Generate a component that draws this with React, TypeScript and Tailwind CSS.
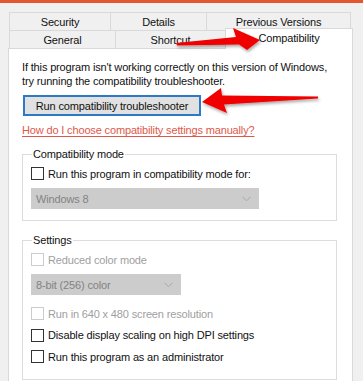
import React from "react";

const font = { fontFamily: '"Liberation Sans", Arial, sans-serif' };

function Check({ label, disabled }: { label: string; disabled?: boolean }) {
    return (
        <div className="flex items-center h-[13px] gap-[4px]">
            <span
                className={
                    "w-[13px] h-[13px] border bg-white shrink-0 " +
                    (disabled ? "border-[#cccccc]" : "border-[#333333]")
                }
            />
            <span className={disabled ? "text-[#a0a0a0]" : "text-[#111111]"}>{label}</span>
        </div>
    );
}

function Select({ value, width }: { value: string; width: string }) {
    return (
        <div className={"h-[21px] bg-[#cccccc] flex items-center justify-between pl-[5px] pr-[8px] text-[#838383] " + width}>
            <span>{value}</span>
            <svg width="9" height="6" viewBox="0 0 9 6" fill="none">
                <path d="M0.5 0.8 L4.5 4.8 L8.5 0.8" stroke="#a6a6a6" strokeWidth="1" />
            </svg>
        </div>
    );
}

export default function App() {
    return (
        <div className="relative w-[363px] h-[381px] bg-[#f0f0f0] overflow-hidden text-[11px] leading-[14px] tracking-[-0.15px]" style={font}>
            <div className="h-[3px] bg-[#e4572e]" />

            {/* Tabs */}
            <div className="pt-[9px] pl-[9px]">
                <div className="flex h-[19px] text-[#111]">
                    <div className="w-[101px] border border-[#d9d9d9] border-r-0 flex items-center justify-center">Security</div>
                    <div className="w-[96px] border border-[#d9d9d9] border-r-0 flex items-center justify-center">Details</div>
                    <div className="w-[145px] border border-[#d9d9d9] flex items-center justify-center">Previous Versions</div>
                </div>
                <div className="flex h-[17px] text-[#111]">
                    <div className="w-[106px] border-l border-[#d9d9d9] flex items-center justify-center">General</div>
                    <div className="w-[110px] border-l border-[#d9d9d9] flex items-center justify-center">Shortcut</div>
                    <div className="w-[128px] -mt-[3px] h-[21px] bg-white border border-b-0 border-[#d9d9d9] flex items-start justify-center pt-[2px]">Compatibility</div>
                </div>
            </div>

            {/* Panel */}
            <div className="ml-[8px] w-[345px] h-[340px] bg-white border-x border-t border-[#d9d9d9] pl-[13px] pt-[11px] text-[#111]">
                <p className="leading-[14px]">
                    If this program isn't working correctly on this version of Windows,
                    <br />
                    try running the compatibility troubleshooter.
                </p>
                <button className="mt-[7px] ml-[1px] w-[178px] h-[21px] bg-[#e1e1e1] border-2 border-[#2d79c7] text-[#111] flex items-center justify-center">
                    Run compatibility troubleshooter
                </button>
                <a className="block mt-[7px] text-[#e0584a] underline underline-offset-2">
                    How do I choose compatibility settings manually?
                </a>

                <fieldset className="mt-[10px] w-[315px] h-[74px] border border-[#dcdcdc] pl-[8px] pt-[0px] m-0">
                    <legend className="ml-[1px] px-[1px]">Compatibility mode</legend>
                    <div className="mt-[6px]">
                        <Check label="Run this program in compatibility mode for:" />
                    </div>
                    <div className="mt-[8px]">
                        <Select value="Windows 8" width="w-[228px]" />
                    </div>
                </fieldset>

                <fieldset className="mt-[12px] w-[315px] h-[147px] border border-[#dcdcdc] pl-[8px] m-0">
                    <legend className="ml-[1px] px-[1px]">Settings</legend>
                    <div className="mt-[6px]">
                        <Check label="Reduced color mode" disabled />
                    </div>
                    <div className="mt-[8px]">
                        <Select value="8-bit (256) color" width="w-[150px]" />
                    </div>
                    <div className="mt-[12px] flex flex-col gap-[8.5px]">
                        <Check label="Run in 640 x 480 screen resolution" disabled />
                        <Check label="Disable display scaling on high DPI settings" />
                        <Check label="Run this program as an administrator" />
                    </div>
                </fieldset>
            </div>

            {/* Red arrows */}
            <svg className="absolute left-0 top-0 pointer-events-none" width="363" height="381" viewBox="0 0 363 381">
                <defs>
                    <filter id="sh" x="-20%" y="-50%" width="140%" height="200%">
                        <feDropShadow dx="1" dy="2" stdDeviation="1.5" floodColor="#000" floodOpacity="0.35" />
                    </filter>
                </defs>
                <path d="M176 43 L236 37 L233 28 L260 40 L247 50 L239 44.5 L177 45.5 Z" fill="#f00000" filter="url(#sh)" />
                <path d="M318 96.5 L222 95.5 L221 88 L202 102 L227 113 L224 104.5 L318 98.5 Z" fill="#f00000" filter="url(#sh)" />
            </svg>
        </div>
    );
}
